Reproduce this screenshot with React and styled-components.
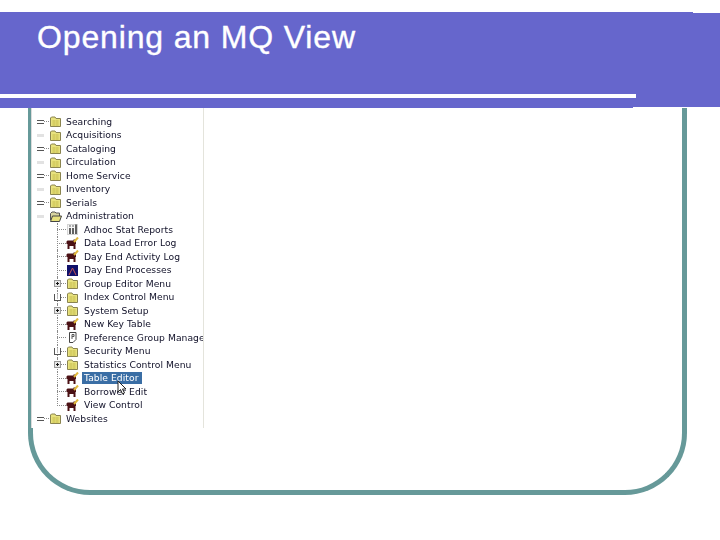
import React from 'react';
import styled, { createGlobalStyle } from 'styled-components';

const GlobalStyle = createGlobalStyle`
  html, body { margin: 0; padding: 0; background: #fff; }
  body { width: 720px; height: 540px; overflow: hidden; font-family: "Liberation Sans", Arial, sans-serif; }
`;

const Slide = styled.div`
  width: 720px;
  height: 540px;
  padding-top: 12px;
  box-sizing: border-box;
`;

const Banner = styled.header`
  height: 95px;
  margin-bottom: 1px;
  background: #6666cc;
  box-sizing: border-box;
  padding: 7px 0 0 37px;
  position: relative;

  &::before {
    content: '';
    position: absolute;
    right: 0;
    top: 0;
    width: 27px;
    height: 1px;
    background: #fff;
  }
  &::after {
    content: '';
    position: absolute;
    left: 0;
    bottom: -1px;
    width: 633px;
    height: 1px;
    background: #6666cc;
  }
`;

const Title = styled.h1`
  margin: 0;
  font-size: 32px;
  line-height: 36px;
  font-weight: 400;
  color: #fff;
  letter-spacing: 0.85px;
  -webkit-text-stroke: 0.35px #fff;
`;

const Rule = styled.div`
  position: absolute;
  left: 0;
  top: 82px;
  width: 636px;
  height: 4px;
  background: #fff;
`;

const Frame = styled.main`
  width: 659px;
  height: 387px;
  margin-left: 28px;
  box-sizing: border-box;
  border: 5px solid #669999;
  border-top: 0;
  border-radius: 0 0 62px 62px;
  padding-top: 7px;
`;

const TreePanel = styled.nav`
  width: 173px;
  height: 320px;
  margin: -7px 0 0 -2px;
  padding: 7px 0 0 2px;
  box-sizing: border-box;
  border-right: 1px solid #e4e4dc;
  background: linear-gradient(90deg, #dcdcdc 0 1px, #fff 1px);
  overflow: hidden;
  filter: blur(0.3px);
`;

const Row = styled.div`
  height: 13.5px;
  display: flex;
  align-items: center;
  padding-left: ${p => p.$depth * 17 + 4}px;
  white-space: nowrap;
  position: relative;

  ${p => p.$depth > 0 && `
    &::before {
      content: '';
      position: absolute;
      left: 24px;
      top: 0;
      height: ${p.$last ? '7px' : '100%'};
      border-left: 1px dotted #8a8a8a;
    }
  `}
`;

const expanderLook = {
  lines: `
    border-top: 1px solid #555;
    border-bottom: 1px solid #555;
    height: 4px;
  `,
  pale: `
    background: #e2e2e2;
    height: 3px;
  `,
  plus: `
    border: 1px solid #9a9a9a;
    background:
      linear-gradient(#111, #111) center / 3px 1px no-repeat,
      linear-gradient(#111, #111) center / 1px 3px no-repeat,
      #e8e8e8;
  `,
  cup: `
    border: 1px solid #555;
    border-top: 0;
    background: #fff;
    &::after {
      content: '';
      position: absolute;
      left: 2px;
      top: 0;
      width: 1px;
      height: 5px;
      background: #bbb;
    }
  `,
};

const Expander = styled.span`
  width: 7px;
  height: 7px;
  flex: none;
  box-sizing: border-box;
  position: relative;
  ${p => expanderLook[p.$kind]}
`;

// dotted stub between the tree line and the icon
const Stub = styled.span`
  width: ${p => p.$width}px;
  flex: none;
  box-sizing: border-box;
  border-top: ${p => (p.$hidden ? '1px solid transparent' : '1px dotted #8a8a8a')};
  margin-left: ${p => p.$left || 0}px;
`;

const Label = styled.span`
  margin-left: ${p => (p.$nested ? 3 : 2)}px;
  padding: ${p => (p.$selected ? '0 4px 0 2px' : '0 2px')};
  font-family: "DejaVu Sans", Verdana, sans-serif;
  font-size: 9.2px;
  line-height: 12px;
  letter-spacing: 0.05px;
  color: ${p => (p.$selected ? '#fff' : '#101028')};
  background: ${p => (p.$selected ? '#3a6ea5' : 'transparent')};
`;

const Icon = styled.svg`
  width: 13px;
  height: 13px;
  flex: none;
`;

const Folder = () => (
  <Icon viewBox="0 0 13 13">
    <path d="M1.5 3V11.5H11.5V3.5H7L6 2H2.5Z" fill="#e8e27e" stroke="#8a8450" />
    <path d="M3 6H10M3 8H10M3 10H10M5 5V11M8 5V11" stroke="#c8c050" strokeWidth="0.7" />
  </Icon>
);

const OpenFolder = () => (
  <Icon viewBox="0 0 13 13">
    <path d="M1.5 10V3.5L3 2H6L7 3H10.5V6" fill="#d8d4a0" stroke="#555" />
    <path d="M1.5 11.5L3.5 6H12.5L10.5 11.5Z" fill="#e6e07c" stroke="#444" />
  </Icon>
);

const Horse = () => (
  <Icon viewBox="0 0 13 13">
    <path d="M0.5 4.5L1.5 3.5H7.5V2.5H10V7H9.5V12H7.5V9H3.5V12H1.5V7H0.5Z" fill="#4a1014" />
    <path d="M8 5L12 0.5" stroke="#e0b83c" strokeWidth="2" />
    <path d="M10.5 4.5L12.5 2.5" stroke="#fff" strokeWidth="0.8" />
  </Icon>
);

const Bars = () => (
  <Icon viewBox="0 0 13 13">
    <rect x="1.5" y="1.5" width="10" height="10" fill="#f6f6f6" stroke="#d4d4d4" />
    <path d="M4 5V11M7 5V11M10 1.5V11" stroke="#111" strokeWidth="1.3" />
    <path d="M4 2.5V3.5M7 2.5V3.5" stroke="#111" strokeWidth="1.3" />
  </Icon>
);

const Night = () => (
  <Icon viewBox="0 0 13 13">
    <rect x="1" y="1" width="11" height="11" fill="#10106a" />
    <path d="M3 11L6.5 4L10 11" fill="none" stroke="#c85858" />
  </Icon>
);

const Doc = () => (
  <Icon viewBox="0 0 13 13">
    <path d="M3.5 1.5H10V8.5L7 11.5H3.5Z" fill="#fff" stroke="#444" />
    <path d="M6 3.5V8M6 3.5H8V5.5H6" fill="none" stroke="#555" />
  </Icon>
);

const Cursor = styled.svg`
  position: absolute;
  left: 84px;
  top: 8px;
  width: 10px;
  height: 15px;
  z-index: 1;
`;

const icons = { folder: Folder, open: OpenFolder, horse: Horse, bars: Bars, night: Night, doc: Doc };

const rows = [
  { label: 'Searching', icon: 'folder', exp: 'lines' },
  { label: 'Acquisitions', icon: 'folder', exp: 'pale' },
  { label: 'Cataloging', icon: 'folder', exp: 'lines' },
  { label: 'Circulation', icon: 'folder', exp: 'pale' },
  { label: 'Home Service', icon: 'folder', exp: 'lines' },
  { label: 'Inventory', icon: 'folder', exp: 'pale' },
  { label: 'Serials', icon: 'folder', exp: 'lines' },
  { label: 'Administration', icon: 'open', exp: 'pale' },
  { label: 'Adhoc Stat Reports', icon: 'bars', depth: 1 },
  { label: 'Data Load Error Log', icon: 'horse', depth: 1 },
  { label: 'Day End Activity Log', icon: 'horse', depth: 1 },
  { label: 'Day End Processes', icon: 'night', depth: 1 },
  { label: 'Group Editor Menu', icon: 'folder', depth: 1, exp: 'plus' },
  { label: 'Index Control Menu', icon: 'folder', depth: 1, exp: 'cup' },
  { label: 'System Setup', icon: 'folder', depth: 1, exp: 'plus' },
  { label: 'New Key Table', icon: 'horse', depth: 1 },
  { label: 'Preference Group Manage', icon: 'doc', depth: 1 },
  { label: 'Security Menu', icon: 'folder', depth: 1, exp: 'cup' },
  { label: 'Statistics Control Menu', icon: 'folder', depth: 1, exp: 'plus' },
  { label: 'Table Editor', icon: 'horse', depth: 1, selected: true },
  { label: 'Borrower Edit', icon: 'horse', depth: 1 },
  { label: 'View Control', icon: 'horse', depth: 1, last: true },
  { label: 'Websites', icon: 'folder', exp: 'lines' },
];

export default function App() {
  return (
    <>
      <GlobalStyle />
      <Slide>
        <Banner>
          <Title>Opening an MQ View</Title>
          <Rule />
        </Banner>
        <Frame>
          <TreePanel>
            {rows.map(r => {
              const Glyph = icons[r.icon];
              return (
                <Row key={r.label} $depth={r.depth || 0} $last={r.last}>
                  {r.exp ? (
                    <>
                      <Expander $kind={r.exp} />
                      <Stub $width={5} $hidden={r.exp === 'pale'} />
                    </>
                  ) : (
                    <Stub $width={9} $left={3} />
                  )}
                  <Glyph />
                  <Label $selected={r.selected} $nested={r.depth > 0}>{r.label}</Label>
                  {r.selected && (
                    <Cursor viewBox="0 0 10 15">
                      <path d="M1 1V12L3.5 9.5L5.5 14L7.5 13L5.5 9H9Z" fill="#fff" stroke="#222" />
                    </Cursor>
                  )}
                </Row>
              );
            })}
          </TreePanel>
        </Frame>
      </Slide>
    </>
  );
}
